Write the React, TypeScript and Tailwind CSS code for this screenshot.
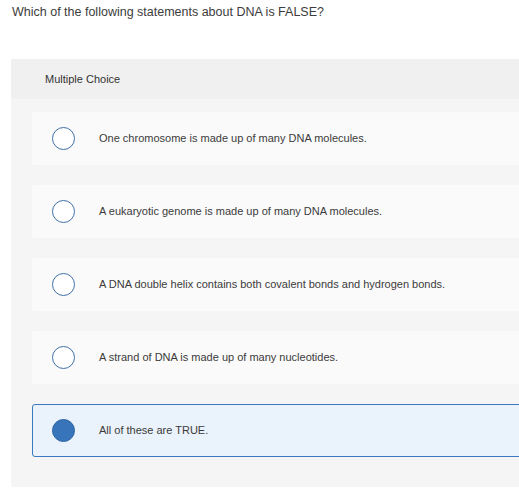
const options = [
  { id: 'a', text: 'One chromosome is made up of many DNA molecules.' },
  { id: 'b', text: 'A eukaryotic genome is made up of many DNA molecules.' },
  { id: 'c', text: 'A DNA double helix contains both covalent bonds and hydrogen bonds.' },
  { id: 'd', text: 'A strand of DNA is made up of many nucleotides.' },
  { id: 'e', text: 'All of these are TRUE.' },
];

const selected = 'e';

export default function App() {
  return (
    <div className="w-[519px] h-[488px] overflow-hidden bg-white font-['Liberation_Sans',Arial,sans-serif] text-[#333]">
      <p className="pt-[4px] pl-[12px] text-[12.5px] leading-[16px] text-[#3c3c3c]">
        Which of the following statements about DNA is FALSE?
      </p>
      <div className="mt-[39px] ml-[11px] w-[560px] h-[428px] rounded-[2px] bg-[#f5f5f5]">
        <div className="h-[40px] bg-[#f0f0f0] pl-[34px] flex items-center text-[11px] text-[#333]">
          Multiple Choice
        </div>
        <div className="pt-[13px] pl-[21px] flex flex-col gap-[20px]">
          {options.map((opt) => {
            const isSel = opt.id === selected;
            return (
              <div
                key={opt.id}
                className={
                  isSel
                    ? 'h-[53px] flex items-center rounded-[3px] border border-[#3b78c2] bg-[#eaf2fb] pl-[19px]'
                    : 'h-[53px] flex items-center rounded-[3px] bg-[#fafafa] pl-[20px]'
                }
              >
                {isSel ? (
                  <span className="w-[23px] h-[23px] rounded-full bg-[#3874ba] border border-[#2f65a5]" />
                ) : (
                  <span className="w-[23px] h-[23px] rounded-full bg-white border-[1.5px] border-[#3f70a6]" />
                )}
                <span className="ml-[24px] text-[11px] text-[#3a3a3a]">{opt.text}</span>
              </div>
            );
          })}
        </div>
      </div>
    </div>
  );
}
